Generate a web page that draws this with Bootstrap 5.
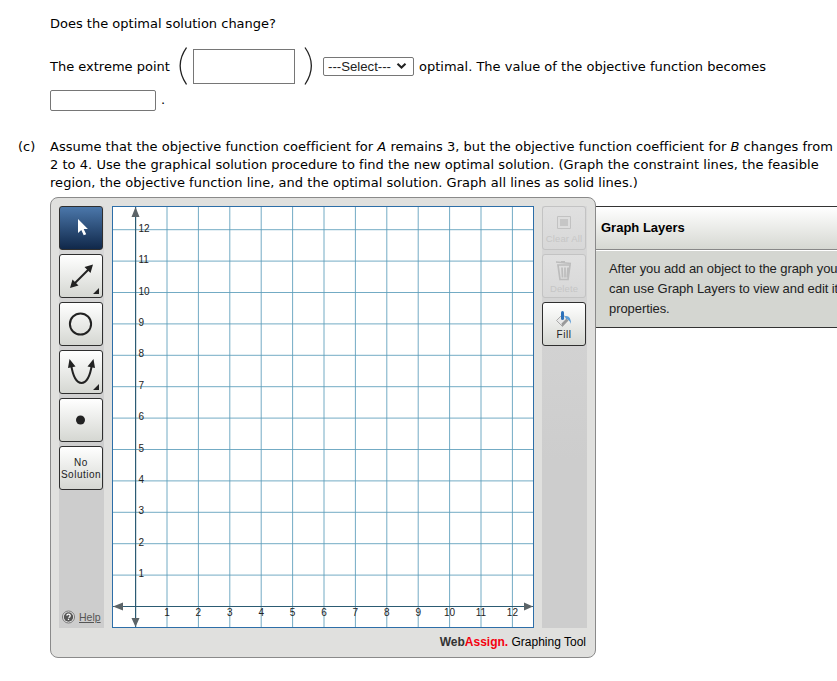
<!DOCTYPE html>
<html lang="en">
<head>
<meta charset="utf-8">
<meta name="viewport" content="width=device-width, initial-scale=1">
<title>Graphing Tool</title>
<link href="https://cdn.jsdelivr.net/npm/bootstrap@5.3.0/dist/css/bootstrap.min.css" rel="stylesheet">
<style>
body{font:13px/18px Verdana,"DejaVu Sans",sans-serif;color:#000;background:#fff;overflow:hidden}
.question{padding:15px 0 0 50px}
.question p,.part p{white-space:nowrap;margin:0}
.answer-row{height:40px;margin-top:13px}
.answer-row p{padding-top:2px}
.answer-row .lead-in{width:128px}
.answer-box{border:1px solid #767676;background:#fff;padding:0;border-radius:0}
.point-box{width:102px;height:35px;margin:0 9px 0 6px}
.value-box{width:106px;height:21px;border-radius:2px}
.stop{padding:1px 0 0 5px}
.pick{appearance:none;width:91px;height:19px;margin:0 5px 0 9px;padding:1px 0 0 4px;border:1px solid #767676;border-radius:2px;background:#fff;color:#222;font:13.2px/16px "Liberation Sans",Arial,sans-serif}
.part{padding-left:18px;margin-top:27px;letter-spacing:.034px}
.part p:first-child{letter-spacing:.02px}
.part-label{width:32px}
.grapher{width:546px;height:461px;margin:5px 0 0 50px;padding:8px;background:#e0e0de;border:1px solid #8a8a8a;border-radius:8px;font-family:"Liberation Sans",Arial,sans-serif}
.strip{width:45px;height:422px;background:linear-gradient(#d8d8d8,#cdcdcd 60%)}
.tool{width:44px;height:44px;padding:0;border:1px solid #2f2f2f;border-radius:3px;background:linear-gradient(#fff,#d5d7d2);color:#222;font-size:10px;line-height:12px;letter-spacing:.5px}
.tool svg{display:block}
.tool.wordy{padding-top:2px}
.tool.picked{background:linear-gradient(#4b77aa,#10284a)}
.tool.idle{border-color:#c3c3c3;background:linear-gradient(#e0e0e0,#d8d8d8);color:#c6c6c6;font-size:9.500px;letter-spacing:.1px}
.help{color:#555;font-size:10.500px;line-height:12px;padding:0 0 4px 3px}
.brand-line{font-size:12px;line-height:16px;margin-top:6px;padding-right:1px;color:#000}
.brand-line b{color:#333}.brand-line b i{font-style:normal;color:#f5000f}
.layers{width:241px;margin-top:14px;border-top:1px solid #333;border-bottom:1px solid #333;font-family:"Liberation Sans",Arial,sans-serif}
.layers h2{height:43px;padding-left:5px;margin:0;font-size:13px;line-height:42px;font-weight:700;background:linear-gradient(#fff,#d6d8d2);border-bottom:1px solid #888}
.layers p{height:77px;margin:0;padding:8px 0 0 13px;border-top:1px solid #fff;background:#d4d6d1;color:#222;font-size:13px;line-height:20px;letter-spacing:-.07px;white-space:nowrap}
</style>
</head>
<body>
<main>
<section class="question">
  <p>Does the optimal solution change?</p>
  <div class="answer-row d-flex align-items-center">
    <p class="lead-in">The extreme point</p>
    <svg width="9" height="40" viewBox="0 0 9 40"><path d="M8.5 1.5Q-4.2 19.5 8.5 38.5" fill="none" stroke="#222" stroke-width="1.3"/></svg>
    <input class="answer-box point-box" aria-label="Extreme point">
    <svg width="10" height="40" viewBox="0 0 10 40"><path d="M1 1.5Q13.7 19.5 1 38.5" fill="none" stroke="#222" stroke-width="1.3"/></svg>
    <div class="position-relative"><select class="pick" aria-label="Optimality"><option>---Select---</option></select><svg class="position-absolute top-50 end-0 translate-middle-y me-2" width="19" height="8" viewBox="0 0 19 8"><path d="M5.5 1.7 9.5 5.5 13.5 1.7" fill="none" stroke="#222" stroke-width="2"/></svg></div>
    <p>optimal. The value of the objective function becomes</p>
  </div>
  <div class="d-flex mt-1"><input class="answer-box value-box" aria-label="Objective value"><span class="stop">.</span></div>
</section>
<section class="part d-flex">
  <div class="part-label">(c)</div>
  <div><p>Assume that the objective function coefficient for <i>A</i> remains 3, but the objective function coefficient for <i>B</i> changes from</p><p>2 to 4. Use the graphical solution procedure to find the new optimal solution. (Graph the constraint lines, the feasible</p><p>region, the objective function line, and the optimal solution. Graph all lines as solid lines.)</p></div>
</section>
<div class="d-flex align-items-start">
  <section class="grapher flex-shrink-0">
    <div class="d-flex gap-2">
      <div class="strip d-flex flex-column gap-1">
        <button class="tool picked" aria-label="Select"><svg width="42" height="42"><path d="M18 12v14l3.3-3.1 2.4 5.4 2.5-1.1-2.5-5.2h4.2Z" fill="#fff"/></svg></button>
        <button class="tool" aria-label="Line"><svg width="42" height="42"><path d="M13 30 30 13" stroke="#222" stroke-width="2"/><path d="m33 9.500-2.500 8.500-6-6ZM10 33l8.500-2.500-6-6ZM39 33v6h-6Z" fill="#222"/></svg></button>
        <button class="tool" aria-label="Circle"><svg width="42" height="42"><circle cx="20.500" cy="21" r="10.600" fill="none" stroke="#222" stroke-width="2"/></svg></button>
        <button class="tool" aria-label="Parabola"><svg width="42" height="42"><path d="M11 13C13 26 17 32 21.500 32S30 26 32 13" fill="none" stroke="#222" stroke-width="2"/><path d="m9.500 8-1.500 9 7.500-1.500ZM33.500 8l-6 7.500 7.500 1.500ZM39 33v6h-6Z" fill="#222"/></svg></button>
        <button class="tool" aria-label="Point"><svg width="42" height="42"><circle cx="20.500" cy="21" r="4.500" fill="#222"/></svg></button>
        <button class="tool wordy">No<br>Solution</button>
        <a class="help d-flex align-items-center mt-auto" href="#"><svg class="me-1" width="13" height="14" viewBox="0 0 13 14"><circle cx="6.500" cy="7" r="6" fill="#eee" stroke="#777"/><circle cx="6.500" cy="7" r="4.700" fill="#555"/><path d="M4.800 5.600Q4.900 4.100 6.500 4.100T8.200 5.600 6.500 7.600M6.500 8.700v1.400" fill="none" stroke="#fff" stroke-width="1.300"/></svg>Help</a>
      </div>
      <svg id="plot" width="422" height="422" viewBox="0 0 422 422" font-family="Liberation Sans,Arial,sans-serif" font-size="10" fill="#222"><rect x=".5" y=".5" width="421" height="421" fill="#fff" stroke="#2d6ea8"/></svg>
      <div class="strip d-flex flex-column gap-1">
        <button class="tool idle text-nowrap"><svg class="mx-auto mt-1" width="16" height="18"><path d="M1.500 1.500h13v12h-13Z" fill="#ddd" stroke="#c2c2c2"/><path d="M4 4h8v7H4Z" fill="#c6c6c6"/></svg><span class="d-block">Clear All</span></button>
        <button class="tool idle"><svg class="mx-auto mt-1" width="18" height="22"><path d="M1 1 16 2.500M6 .5h4M3 4h12l-2 14.500H5ZM7 6.500l.5 10M10 6.500v10M13 6.500l-.8 10" fill="none" stroke="#bcbcbc" stroke-width="1.700"/></svg>Delete</button>
        <button class="tool"><svg class="mx-auto mt-1" width="18" height="18"><path d="m1.500 9.500 6-6 6 5-6 7Z" fill="#e8e8e8" stroke="#aaa"/><path d="m7 15.500 6.500-6-2-2-5 5Z" fill="#999"/><path d="M10 5q6-1 6 8-2-5-5-5Z" fill="#5f9ed6"/><path d="M7.500 1.500v6" stroke="#2d71ba" stroke-width="3" stroke-linecap="round"/></svg><span class="d-block">Fill</span></button>
      </div>
    </div>
    <div class="brand-line text-end"><b>Web<i>Assign.</i></b> Graphing Tool</div>
  </section>
  <aside class="layers flex-shrink-0"><h2>Graph Layers</h2><p>After you add an object to the graph you<br>can use Graph Layers to view and edit it<br>properties.</p></aside>
</div>
</main>
<script src="https://cdn.jsdelivr.net/npm/bootstrap@5.3.0/dist/js/bootstrap.bundle.min.js"></script>
<script>
// Grid lines sit one unit (31.4px) apart from the origin.
const unit = 31.4, ox = 23.6, oy = 400.5;
let lines = '', labels = '';
for (let n = 1; n <= 12; n++) {
  const x = ox + n * unit, y = oy - n * unit;
  lines += `<path d="M${x} 1V421M1 ${y}H421"/>`;
  labels += `<text x="${x}" y="410" text-anchor="middle">${n}</text><text x="26.500" y="${y + 2}">${n}</text>`;
}
document.getElementById('plot').insertAdjacentHTML('beforeend',
  `<g stroke="#5b9cba" stroke-opacity=".85" shape-rendering="geometricPrecision" fill="none">${lines}</g><path d="M${ox} 1V421M1 ${oy}H421" stroke="#2c5b73" stroke-width="1.200" fill="none"/>` +
  `<path d="M23.500 1l4 10h-8ZM23.500 421l4-9h-8ZM1 400.500l10-4v8ZM421 400.500l-9-4v8Z" fill="#5c6468"/>` + labels);
</script>
</body>
</html>
